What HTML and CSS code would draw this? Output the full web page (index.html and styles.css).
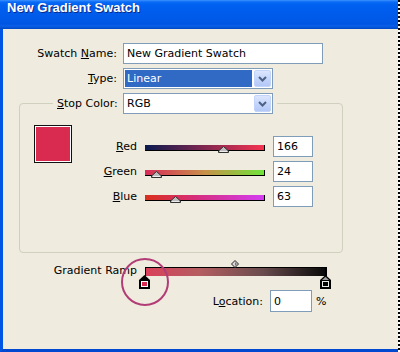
FILE: index.html
```html
<!DOCTYPE html>
<html lang="en">
<head>
    <meta charset="UTF-8">
    <meta name="viewport" content="width=device-width, initial-scale=1.0">
    <title>New Gradient Swatch</title>
    <link rel="stylesheet" href="styles.css">
</head>
<body>
    <div class="screen">
        <div class="window">
            <div class="titlebar">New Gradient Swatch</div>
            <div class="client">
                <!-- name / type -->
                <div class="form">
                    <label class="label">Swatch <u>N</u>ame:</label>
                    <input class="field name-field" type="text" value="New Gradient Swatch">
                    <label class="label"><u>T</u>ype:</label>
                    <div class="combo">
                        <div class="combo-value selected">Linear</div>
                        <div class="combo-btn">
                            <svg width="9" height="6" viewBox="0 0 9 6"><polyline points="1,1 4.5,4.5 8,1" fill="none" stroke="#4d6185" stroke-width="2"/></svg>
                        </div>
                    </div>
                </div>

                <!-- stop colour group -->
                <fieldset class="group">
                    <legend class="group-legend">
                        <label class="label stop-label"><u>S</u>top Color:</label>
                        <div class="combo">
                            <div class="combo-value">RGB</div>
                            <div class="combo-btn">
                                <svg width="9" height="6" viewBox="0 0 9 6"><polyline points="1,1 4.5,4.5 8,1" fill="none" stroke="#4d6185" stroke-width="2"/></svg>
                            </div>
                        </div>
                    </legend>
                    <div class="group-body">
                        <div class="swatch"></div>
                        <div class="sliders">
                            <label class="label"><u>R</u>ed</label>
                            <div class="slider">
                                <div class="track track-red"></div>
                                <svg class="thumb" style="left: 65.1%;" width="11" height="7" viewBox="0 0 11 7"><polygon points="5.5,0.5 10.5,5 10.5,6.5 0.5,6.5 0.5,5" fill="#bdbdbd" stroke="#333"/><line x1="2" y1="5.5" x2="9" y2="5.5" stroke="#eee"/></svg>
                            </div>
                            <input class="field num" type="text" value="166">

                            <label class="label"><u>G</u>reen</label>
                            <div class="slider">
                                <div class="track track-green"></div>
                                <svg class="thumb" style="left: 9.4%;" width="11" height="7" viewBox="0 0 11 7"><polygon points="5.5,0.5 10.5,5 10.5,6.5 0.5,6.5 0.5,5" fill="#bdbdbd" stroke="#333"/><line x1="2" y1="5.5" x2="9" y2="5.5" stroke="#eee"/></svg>
                            </div>
                            <input class="field num" type="text" value="24">

                            <label class="label"><u>B</u>lue</label>
                            <div class="slider">
                                <div class="track track-blue"></div>
                                <svg class="thumb" style="left: 24.7%;" width="11" height="7" viewBox="0 0 11 7"><polygon points="5.5,0.5 10.5,5 10.5,6.5 0.5,6.5 0.5,5" fill="#bdbdbd" stroke="#333"/><line x1="2" y1="5.5" x2="9" y2="5.5" stroke="#eee"/></svg>
                            </div>
                            <input class="field num" type="text" value="63">
                        </div>
                    </div>
                </fieldset>

                <!-- gradient ramp -->
                <div class="ramp-row">
                    <div class="ramp-label">Gradient Ramp</div>
                    <div class="ramp-wrap">
                        <svg class="midpoint" width="8" height="8" viewBox="0 0 8 8"><polygon points="4,0.5 7.5,4 4,7.5 0.5,4" fill="#d8d8d8" stroke="#222"/><polygon points="4,2 6,4 4,6" fill="#777"/></svg>
                        <div class="ramp-bar"></div>
                        <svg class="stop stop-left" width="11" height="14" viewBox="0 0 11 14">
                            <polygon points="5.5,0 11,5 11,14 0,14 0,5" fill="#000"/>
                            <rect x="2" y="6" width="7" height="6" fill="#fff"/>
                            <rect x="3" y="7" width="5" height="4" fill="#d92b50"/>
                        </svg>
                        <svg class="stop stop-right" width="11" height="14" viewBox="0 0 11 14">
                            <polygon points="5.5,0 11,5 11,14 0,14 0,5" fill="#000"/>
                            <polygon points="5.5,1.8 9,5 2,5" fill="#9a9a9a"/>
                            <rect x="2" y="6" width="7" height="6" fill="#e8e8e8"/>
                            <rect x="3" y="7" width="5" height="4" fill="#000"/>
                        </svg>
                        <div class="highlight"></div>
                    </div>
                </div>

                <div class="location-row">
                    <label class="loc-label">L<u>o</u>cation:</label>
                    <input class="field loc-field" type="text" value="0">
                    <span class="percent">%</span>
                </div>
            </div>
        </div>
        <div class="edge"></div>
    </div>
</body>
</html>
```

FILE: styles.css
```css
body {
    margin: 0;
    font-family: "DejaVu Sans", Verdana, sans-serif;
    font-size: 11px;
    color: #000;
    background: #fff;
}
.screen {
    display: flex;
    width: 400px;
    height: 352px;
}
.window {
    width: 398px;
    display: flex;
    flex-direction: column;
}
.edge {
    width: 2px;
    background: repeating-linear-gradient(to bottom, #000 0 2px, #fff 2px 4px);
}
.titlebar {
    flex: none;
    height: 29px;
    padding-left: 7px;
    line-height: 30px;
    font: bold 13px "Liberation Sans", Arial, sans-serif;
    color: #fff;
    text-shadow: 1px 1px 0 #0a2a8a;
    background: linear-gradient(to bottom, #3a93ff 0, #0a6af5 2px, #0060f0 5px, #005ae9 18px, #0056e2 24px, #0a5fe8 26px, #0048c4 29px);
}
.client {
    flex: 1;
    background: #efebde;
    border-left: 3px solid #0055e5;
    border-bottom: 3px solid #0048d0;
}

/* top form */
.form {
    display: grid;
    grid-template-columns: 114px auto;
    column-gap: 6px;
    row-gap: 4px;
    margin-top: 14px;
    align-items: center;
}
.label {
    text-align: right;
    white-space: nowrap;
}
.field {
    height: 21px;
    box-sizing: border-box;
    border: 1px solid #7f9db9;
    background: #fff;
    padding: 0 3px;
    font: inherit;
    color: #000;
    outline: none;
    margin: 0;
}
.name-field {
    width: 200px;
}
.combo {
    display: flex;
    width: 150px;
    height: 21px;
    box-sizing: border-box;
    border: 1px solid #7f9db9;
    background: #fff;
    padding: 1px;
}
.combo-value {
    flex: 1;
    padding-left: 2px;
    line-height: 17px;
}
.combo-value.selected {
    margin: 0 2px 0 0;
    background: #316ac5;
    color: #fff;
}
.combo-btn {
    width: 15px;
    display: flex;
    align-items: center;
    justify-content: center;
    border: 1px solid #c2d3fc;
    border-radius: 2px;
    background: linear-gradient(to bottom, #dce6fd, #c1d3fb 60%, #b4c8f6);
}

/* stop colour group */
.group {
    margin: 4px 0 0 16px;
    width: 324px;
    box-sizing: border-box;
    padding: 0;
    border: 1px solid #d0d0bf;
    border-radius: 4px;
    min-width: 0;
}
.group-legend {
    display: flex;
    align-items: center;
    gap: 6px;
    margin-left: 33px;
    padding: 0 4px;
}
.stop-label {
    width: 60px;
}
.group-body {
    display: flex;
    align-items: flex-start;
    height: 138px;
    box-sizing: border-box;
    padding: 11px 0 0 14px;
}
.swatch {
    width: 38px;
    height: 38px;
    box-sizing: border-box;
    border: 1px solid #111;
    box-shadow: inset 0 0 0 1px #fff;
    background: #d92b50;
}
.sliders {
    display: grid;
    grid-template-columns: 65px 120px 40px;
    grid-auto-rows: 21px;
    column-gap: 8px;
    row-gap: 4px;
    margin-top: 11px;
    align-items: center;
}
.slider {
    position: relative;
    height: 21px;
}
.track {
    margin-top: 9px;
    height: 6px;
    box-sizing: border-box;
    border-bottom: 1px solid #000;
    border-right: 1px solid #000;
}
.track-red {
    background: linear-gradient(to right, #0a1a4e, #f73350);
}
.track-green {
    background: linear-gradient(to right, #d92b58, #c8904a 50%, #6fe43a);
}
.track-blue {
    background: linear-gradient(to right, #d9301c, #d62e80 45%, #d43cf2);
}
.thumb {
    position: absolute;
    top: 10px;
    margin-left: -5px;
}

/* gradient ramp */
.ramp-row {
    display: flex;
    margin-top: 3px;
}
.ramp-label {
    width: 134px;
    text-align: right;
    padding-top: 8px;
    line-height: 13px;
}
.ramp-wrap {
    position: relative;
    width: 182px;
    height: 32px;
    margin-left: 8px;
}
.ramp-bar {
    margin-top: 11px;
    height: 9px;
    box-sizing: border-box;
    border: 1px solid #000;
    border-bottom: 0;
    border-right-width: 2px;
    background: linear-gradient(to right, #d9405a, #b45e60 30%, #6a4c4e 65%, #0a0a0a);
}
.midpoint {
    position: absolute;
    top: 4px;
    left: 86px;
}
.stop {
    position: absolute;
    top: 19px;
}
.stop-left {
    left: -6px;
}
.stop-right {
    left: 175px;
}
.highlight {
    position: absolute;
    left: -24px;
    top: 2px;
    width: 48px;
    height: 48px;
    box-sizing: border-box;
    border: 2px solid #b23c76;
    border-radius: 50%;
}

/* location */
.location-row {
    display: flex;
    align-items: center;
    margin-top: 2px;
}
.loc-label {
    width: 260px;
    text-align: right;
}
.loc-field {
    width: 42px;
    height: 22px;
    margin-left: 7px;
}
.percent {
    margin-left: 4px;
}
```
